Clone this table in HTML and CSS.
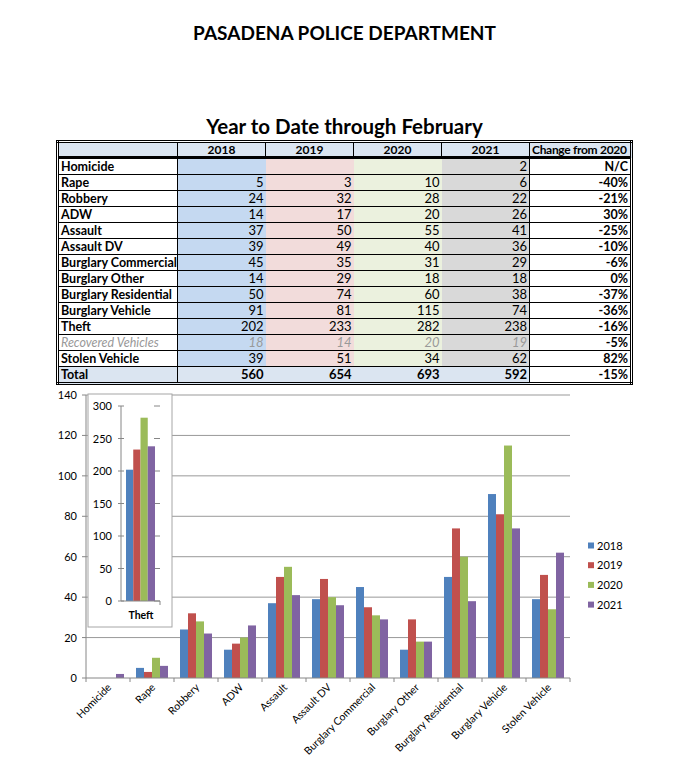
FILE: index.html
```html
<!DOCTYPE html>
<html lang="en">
<head>
  <meta charset="UTF-8">
  <meta name="viewport" content="width=device-width, initial-scale=1.0">
  <title>Pasadena Police Department - Year to Date</title>
  <link rel="stylesheet" href="styles.css">
</head>
<body>
  <div class="page">
    <h1 class="title">PASADENA POLICE DEPARTMENT</h1>
    <h2 class="subtitle">Year to Date through February</h2>

    <table class="stats">
      <colgroup>
        <col class="c-label">
        <col class="c-2018">
        <col class="c-2019">
        <col class="c-2020">
        <col class="c-2021">
        <col class="c-change">
      </colgroup>
      <thead>
        <tr><th></th><th>2018</th><th>2019</th><th>2020</th><th>2021</th><th class="chg-head">Change from 2020</th></tr>
      </thead>
      <tbody>
        <tr><td class="label">Homicide</td><td></td><td></td><td></td><td>2</td><td class="chg">N/C</td></tr>
        <tr><td class="label">Rape</td><td>5</td><td>3</td><td>10</td><td>6</td><td class="chg">-40%</td></tr>
        <tr><td class="label">Robbery</td><td>24</td><td>32</td><td>28</td><td>22</td><td class="chg">-21%</td></tr>
        <tr><td class="label">ADW</td><td>14</td><td>17</td><td>20</td><td>26</td><td class="chg">30%</td></tr>
        <tr><td class="label">Assault</td><td>37</td><td>50</td><td>55</td><td>41</td><td class="chg">-25%</td></tr>
        <tr><td class="label">Assault DV</td><td>39</td><td>49</td><td>40</td><td>36</td><td class="chg">-10%</td></tr>
        <tr><td class="label">Burglary Commercial</td><td>45</td><td>35</td><td>31</td><td>29</td><td class="chg">-6%</td></tr>
        <tr><td class="label">Burglary Other</td><td>14</td><td>29</td><td>18</td><td>18</td><td class="chg">0%</td></tr>
        <tr><td class="label">Burglary Residential</td><td>50</td><td>74</td><td>60</td><td>38</td><td class="chg">-37%</td></tr>
        <tr><td class="label">Burglary Vehicle</td><td>91</td><td>81</td><td>115</td><td>74</td><td class="chg">-36%</td></tr>
        <tr><td class="label">Theft</td><td>202</td><td>233</td><td>282</td><td>238</td><td class="chg">-16%</td></tr>
        <tr class="recovered"><td class="label">Recovered Vehicles</td><td>18</td><td>14</td><td>20</td><td>19</td><td class="chg">-5%</td></tr>
        <tr><td class="label">Stolen Vehicle</td><td>39</td><td>51</td><td>34</td><td>62</td><td class="chg">82%</td></tr>
        <tr class="total"><td class="label">Total</td><td>560</td><td>654</td><td>693</td><td>592</td><td class="chg">-15%</td></tr>
      </tbody>
    </table>

    <svg class="chart" id="chart" width="689" height="386" viewBox="0 385 689 386" xmlns="http://www.w3.org/2000/svg"></svg>
  </div>

  <script>
    // chart data, same figures as the table (Theft goes in the inset)
    const years = ["2018", "2019", "2020", "2021"];
    const colors = ["#4f81bd", "#c0504d", "#9bbb59", "#8064a2"];
    const rows = [
      ["Homicide", [0, 0, 0, 2]],
      ["Rape", [5, 3, 10, 6]],
      ["Robbery", [24, 32, 28, 22]],
      ["ADW", [14, 17, 20, 26]],
      ["Assault", [37, 50, 55, 41]],
      ["Assault DV", [39, 49, 40, 36]],
      ["Burglary Commercial", [45, 35, 31, 29]],
      ["Burglary Other", [14, 29, 18, 18]],
      ["Burglary Residential", [50, 74, 60, 38]],
      ["Burglary Vehicle", [91, 81, 115, 74]],
      ["Stolen Vehicle", [39, 51, 34, 62]]
    ];
    const theft = [202, 233, 282, 238];

    const svg = document.getElementById("chart");
    const NS = "http://www.w3.org/2000/svg";

    function add(tag, attrs, text) {
      const el = document.createElementNS(NS, tag);
      for (const k in attrs) el.setAttribute(k, attrs[k]);
      if (text !== undefined) el.textContent = text;
      svg.appendChild(el);
      return el;
    }

    // main plot
    const plotLeft = 86, plotRight = 570, plotBase = 678, plotTop = 395;
    const scale = (plotBase - plotTop) / 140;
    const step = (plotRight - plotLeft) / rows.length;

    for (let v = 20; v <= 140; v += 20) {
      const y = plotBase - v * scale;
      add("line", { x1: plotLeft, x2: plotRight, y1: y, y2: y, class: "grid" });
    }
    for (let v = 0; v <= 140; v += 20) {
      const y = plotBase - v * scale;
      add("line", { x1: plotLeft - 4, x2: plotLeft, y1: y, y2: y, class: "axis" });
      add("text", { x: 77, y: y + 4, class: "tick-label", "text-anchor": "end" }, v);
    }

    rows.forEach(([name, vals], i) => {
      const x0 = plotLeft + step * i;
      vals.forEach((v, j) => {
        if (!v) return;
        const h = v * scale;
        add("rect", { x: x0 + 6 + 8 * j, y: plotBase - h, width: 8, height: h, fill: colors[j] });
      });
      const cx = x0 + step / 2 + 4;
      add("text", { x: cx, y: 688, class: "cat-label", "text-anchor": "end",
        transform: "rotate(-45 " + cx + " 688)" }, name);
    });

    add("line", { x1: plotLeft, x2: plotLeft, y1: plotTop, y2: plotBase, class: "axis" });
    add("line", { x1: plotLeft, x2: plotRight, y1: plotBase, y2: plotBase, class: "axis" });
    for (let i = 0; i <= rows.length; i++) {
      const x = plotLeft + step * i;
      add("line", { x1: x, x2: x, y1: plotBase, y2: plotBase + 4, class: "axis" });
    }

    // legend
    years.forEach((yr, j) => {
      const y = 545.5 + j * 19.7;
      add("rect", { x: 588, y: y - 3, width: 6, height: 6, fill: colors[j] });
      add("text", { x: 597, y: y + 4, class: "legend" }, yr);
    });

    // theft inset
    add("rect", { x: 88, y: 394, width: 84, height: 233, class: "inset" });
    const iBase = 601, iAxis = 121, iScale = 0.65;
    for (let v = 0; v <= 300; v += 50) {
      const y = iBase - v * iScale;
      add("line", { x1: iAxis - 3, x2: iAxis + 3, y1: y, y2: y, class: "axis" });
      add("line", { x1: 154, x2: 160, y1: y, y2: y, class: "axis" });
      add("text", { x: 112, y: y + 4, class: "tick-label", "text-anchor": "end" }, v);
    }
    theft.forEach((v, j) => {
      const h = v * iScale;
      add("rect", { x: 126 + 7.25 * j, y: iBase - h, width: 7.25, height: h, fill: colors[j] });
    });
    add("line", { x1: iAxis, x2: iAxis, y1: 406, y2: iBase, class: "axis" });
    add("line", { x1: iAxis, x2: 160, y1: iBase, y2: iBase, class: "axis" });
    add("line", { x1: 160, x2: 160, y1: iBase, y2: iBase + 4, class: "axis" });
    add("text", { x: 141, y: 619, class: "inset-label", "text-anchor": "middle" }, "Theft");
  </script>
</body>
</html>
```

FILE: styles.css
```css
body {
  margin: 0;
  background: #fff;
  color: #000;
  font-family: Lato, "Open Sans", sans-serif;
}
.page {
  width: 689px;
  display: flex;
  flex-direction: column;
  align-items: center;
}
.title {
  margin: 21px 0 0;
  font-size: 19px;
  line-height: 24px;
  font-weight: bold;
}
.subtitle {
  margin: 69px 0 0;
  font-size: 20.5px;
  line-height: 24px;
  font-weight: bold;
}
table.stats {
  margin-top: 2px;
  width: 574px;
  border-collapse: collapse;
  table-layout: fixed;
  border: 3px double #000;
  font-size: 13px;
}
.c-label { width: 120px; background: #fff; }
.c-2018 { width: 88px; background: #c5d9f1; }
.c-2019 { width: 88px; background: #f2dcdb; }
.c-2020 { width: 88px; background: #ebf1de; }
.c-2021 { width: 88px; background: #d9d9d9; }
.c-change { width: 102px; background: #fff; }
.stats thead tr {
  background: #dbe5f1;
}
.stats th {
  height: 13px;
  padding: 0 2px;
  line-height: 13px;
  border: 1px solid #000;
  border-bottom: 3px solid #000;
  font-size: 12px;
  font-weight: bold;
  white-space: nowrap;
}
.stats th.chg-head {
  text-align: left;
  letter-spacing: -0.3px;
}
.stats td {
  height: 15px;
  padding: 0 2px;
  line-height: 15px;
  border-top: 1px solid #000;
  border-bottom: 1px solid #000;
  text-align: right;
  white-space: nowrap;
}
.stats td.label {
  text-align: left;
  font-size: 12.5px;
  font-weight: bold;
  border-right: 1px solid #000;
}
.stats td.chg {
  font-size: 12.5px;
  font-weight: bold;
  border-left: 1px solid #000;
}
.stats tr.recovered td {
  color: #999;
  font-style: italic;
}
.stats tr.recovered td.label {
  font-weight: normal;
}
.stats tr.recovered td.chg {
  color: #000;
  font-style: normal;
  font-weight: bold;
}
.stats tr.total {
  background: #dbe5f1;
  font-weight: bold;
}
.stats tr.total td.chg {
  background: #fff;
}
.chart {
  display: block;
  margin-top: 0;
  font-family: Lato, "Open Sans", sans-serif;
}
.chart .grid {
  stroke: #999;
  stroke-width: 1;
}
.chart .axis {
  stroke: #868686;
  stroke-width: 1;
}
.chart .tick-label {
  font-size: 11px;
  fill: #000;
}
.chart .cat-label {
  font-size: 10.5px;
  fill: #000;
}
.chart .legend {
  font-size: 11px;
  fill: #000;
}
.chart .inset {
  fill: #fff;
  stroke: #a6a6a6;
  stroke-width: 1;
}
.chart .inset-label {
  font-size: 10.5px;
  font-weight: bold;
  fill: #000;
}
```
